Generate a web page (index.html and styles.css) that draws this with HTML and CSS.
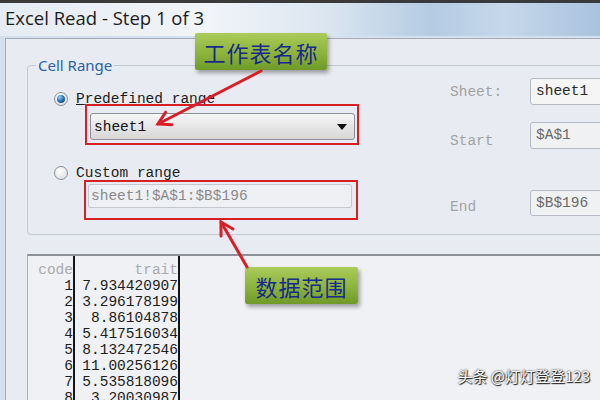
FILE: index.html
```html
<!DOCTYPE html>
<html lang="zh">
<head>
  <meta charset="UTF-8" />
  <title>Excel Read - Step 1 of 3</title>
  <link rel="stylesheet" href="styles.css">
</head>
<body>
  <div class="screen">
    <div class="topstrip"></div>
    <div class="titlebar">Excel Read - Step 1 of 3</div>

    <div class="frame">
      <div class="client">
        <fieldset class="range">
          <legend>Cell Range</legend>
          <div class="range-body">
            <div class="options">
              <label class="option"><span class="radio on"></span><span><u>P</u>redefined range</span></label>
              <div class="mark mark-combo">
                <div class="combo"><span>sheet1</span><span class="caret"></span></div>
              </div>
              <label class="option second"><span class="radio"></span><span>Custom range</span></label>
              <div class="mark mark-text">
                <div class="textbox">sheet1!$A$1:$B$196</div>
              </div>
            </div>

            <div class="fields">
              <div class="field"><span class="flabel">Sheet:</span><span class="fbox">sheet1</span></div>
              <div class="field start"><span class="flabel">Start</span><span class="fbox dim">$A$1</span></div>
              <div class="field end"><span class="flabel">End</span><span class="fbox dim">$B$196</span></div>
            </div>
          </div>
        </fieldset>

        <div class="data">
          <div class="sheet">
            <div class="c h">code</div><div class="c h">trait</div>
            <div class="c">1</div><div class="c">7.934420907</div>
            <div class="c">2</div><div class="c">3.296178199</div>
            <div class="c">3</div><div class="c">8.86104878</div>
            <div class="c">4</div><div class="c">5.417516034</div>
            <div class="c">5</div><div class="c">8.132472546</div>
            <div class="c">6</div><div class="c">11.00256126</div>
            <div class="c">7</div><div class="c">5.535818096</div>
            <div class="c">8</div><div class="c">3.20030987</div>
          </div>
        </div>
      </div>
    </div>

    <!-- annotations drawn over the dialog -->
    <div class="tag tag-sheet">工作表名称</div>
    <div class="tag tag-range">数据范围</div>
    <svg class="arrows" width="600" height="400" viewBox="0 0 600 400">
      <g stroke="#d81e28" stroke-width="3" fill="none" stroke-linecap="round">
        <line x1="261" y1="71" x2="158" y2="124" />
        <polyline points="172,124.7 158,124 165.6,112.2" />
        <line x1="247" y1="267" x2="221" y2="222" />
        <polyline points="221,236 221,222 233,229" />
      </g>
    </svg>
    <div class="watermark">头条 @灯灯登登123</div>
  </div>
</body>
</html>
```

FILE: styles.css
```css
html, body {
  margin: 0;
  padding: 0;
}

body {
  width: 600px;
  height: 400px;
  overflow: hidden;
  background: #e9edf3;
  font-family: "Liberation Mono", monospace;
}

.screen {
  position: relative;
  width: 600px;
  height: 400px;
  overflow: hidden;
}

.topstrip {
  height: 3px;
  background: #3a3a3a;
}

.titlebar {
  height: 33px;
  line-height: 30px;
  padding-left: 5px;
  font-family: "Open Sans", sans-serif;
  font-size: 18.5px;
  color: #1c1c1c;
  background: linear-gradient(to right, #e6ecf3 0%, #f1f4f8 35%, #dae5f0 55%, #b4cbe3 72%, #c6d8eb 84%, #a9c2de 100%);
}

.frame {
  width: 700px;
  height: 364px;
  padding: 2px 0 0 5px;
  background: #d6e0ec;
}

.client {
  height: 100%;
  border-top: 1px solid #a3acb8;
  border-left: 1px solid #a3acb8;
  background: #e8ecf2;
  padding: 17px 0 0 21px;
}

/* cell range group */
.range {
  margin: 0;
  padding: 0;
  width: 660px;
  min-width: 0;
  border: 1px solid #c2c9d3;
  border-radius: 4px;
}

.range legend {
  margin-left: 8px;
  padding: 0 2px;
  font-family: "Noto Sans", sans-serif;
  font-size: 15px;
  line-height: 18px;
  color: #2862a9;
}

.range-body {
  display: flex;
  padding: 0 0 14px 26px;
}

.options {
  width: 396px;
  display: flex;
  flex-direction: column;
  padding-top: 17px;
}

.option {
  display: flex;
  align-items: center;
  height: 16px;
  line-height: 16px;
  font-size: 14.5px;
  color: #1b1b1b;
}

.option.second {
  margin-top: 20px;
}

.radio {
  width: 14px;
  height: 14px;
  box-sizing: border-box;
  margin-right: 8px;
  border: 1px solid #8b9098;
  border-radius: 50%;
  background: radial-gradient(circle at 40% 35%, #ffffff, #d4d7dc);
  display: flex;
  align-items: center;
  justify-content: center;
}

.radio.on::after {
  content: "";
  width: 8px;
  height: 8px;
  border-radius: 50%;
  background: radial-gradient(circle at 35% 30%, #9fd3f5, #2b78b8 45%, #0d3b66);
}

.mark {
  box-sizing: border-box;
  width: 274px;
  border: 2px solid #d71f26;
}

.mark-combo {
  margin: -3px 0 0 31px;
  padding: 7px 2px 3px 3px;
}

.combo {
  height: 27px;
  box-sizing: border-box;
  border: 1px solid #8d9096;
  border-radius: 3px;
  background: linear-gradient(#f7f7f7, #e6e6e6 50%, #d7d7d7);
  display: flex;
  align-items: center;
  justify-content: space-between;
  padding: 0 7px 0 3px;
  font-size: 14.5px;
  color: #111;
}

.caret {
  width: 0;
  height: 0;
  border-left: 5px solid transparent;
  border-right: 5px solid transparent;
  border-top: 6px solid #111;
}

.mark-text {
  margin: -1px 0 0 30px;
  padding: 2px 4px 10px 2px;
}

.textbox {
  height: 24px;
  box-sizing: border-box;
  border: 1px solid #c4c8ce;
  border-radius: 2px;
  background: #eef0f3;
  padding-left: 2px;
  line-height: 22px;
  font-size: 14.5px;
  color: #8a8a8a;
}

.fields {
  padding-top: 4px;
}

.field {
  display: flex;
  align-items: center;
}

.field.start {
  margin-top: 16px;
}

.field.end {
  margin-top: 41px;
}

.flabel {
  width: 80px;
  font-size: 14.5px;
  color: #a3a3a3;
}

.field.start .flabel {
  padding-top: 12px;
}

.field.end .flabel {
  padding-top: 8px;
}

.fbox {
  width: 110px;
  height: 27px;
  box-sizing: border-box;
  border: 1px solid #b6bbc3;
  border-radius: 3px;
  background: #f5f5f5;
  padding-left: 5px;
  line-height: 25px;
  font-size: 14.5px;
  color: #2a2a2a;
}

.fbox.dim {
  color: #6a6a6a;
  background: #f0f1f3;
}

.field.end .fbox {
  height: 26px;
}

/* data preview */
.data {
  margin-top: 19px;
  width: 700px;
  height: 200px;
  border-top: 2px solid #8d9299;
  border-left: 1px solid #adb2b9;
  background: #eff1f5;
}

.sheet {
  display: grid;
  grid-template-columns: 47px 105px;
}

.c {
  height: 16px;
  line-height: 16px;
  text-align: right;
  border-right: 2px solid #151515;
  font-size: 14.5px;
  color: #1e1e1e;
}

.c.h {
  height: 22px;
  padding-top: 6px;
  box-sizing: border-box;
  color: #ababab;
}

/* annotations */
.tag {
  position: absolute;
  display: flex;
  align-items: center;
  justify-content: center;
  height: 37px;
  border-radius: 2px;
  background: linear-gradient(#abcb5a, #8cb33c 55%, #6f9a27);
  box-shadow: 2px 3px 4px rgba(0, 0, 0, 0.35);
  font-family: "Noto Sans CJK SC", sans-serif;
  font-size: 22px;
  letter-spacing: 1px;
  color: #182a8c;
}

.tag-sheet {
  left: 195px;
  top: 33px;
  width: 132px;
}

.tag-range {
  left: 245px;
  top: 267px;
  width: 113px;
}

.arrows {
  position: absolute;
  left: 0;
  top: 0;
}

.watermark {
  position: absolute;
  right: 10px;
  bottom: 14px;
  font-family: "Noto Sans CJK SC", sans-serif;
  font-size: 15px;
  color: #fff;
  text-shadow: 0 0 2px #000, 1px 1px 1px #222;
}
```
